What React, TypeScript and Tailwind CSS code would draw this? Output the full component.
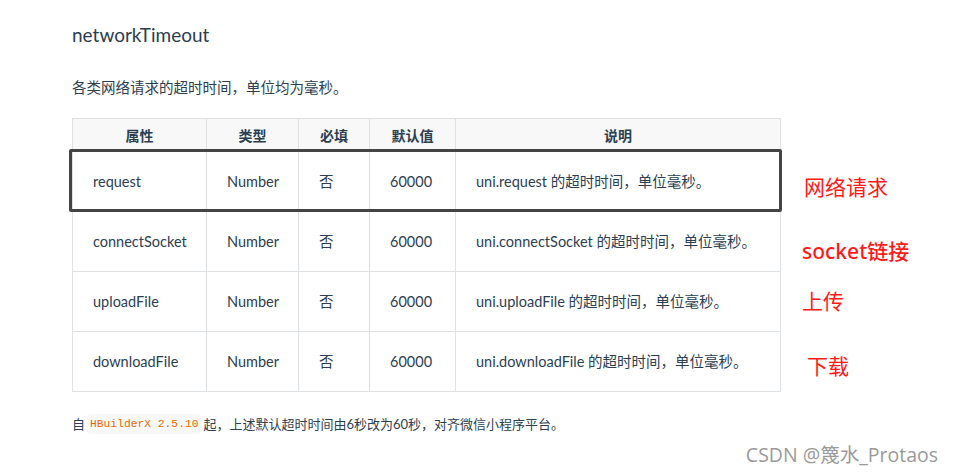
import React from "react";

interface Row {
  name: string;
  type: string;
  required: string;
  value: string;
  desc: string;
}

const rows: Row[] = [
  { name: "request", type: "Number", required: "否", value: "60000", desc: "uni.request 的超时时间，单位毫秒。" },
  { name: "connectSocket", type: "Number", required: "否", value: "60000", desc: "uni.connectSocket 的超时时间，单位毫秒。" },
  { name: "uploadFile", type: "Number", required: "否", value: "60000", desc: "uni.uploadFile 的超时时间，单位毫秒。" },
  { name: "downloadFile", type: "Number", required: "否", value: "60000", desc: "uni.downloadFile 的超时时间，单位毫秒。" },
];

const headers = ["属性", "类型", "必填", "默认值", "说明"];
const widths = ["w-[134px]", "w-[92px]", "w-[71px]", "w-[86px]", "w-[325px]"];

const font = { fontFamily: '"Lato", "Noto Sans CJK SC", sans-serif' };

export default function App() {
  return (
    <div
      className="relative h-[475px] w-[954px] overflow-hidden bg-white pl-[72px] text-[#2c3e50]"
      style={font}
    >
      <h2 className="pt-[23px] text-[19px] leading-6 font-normal">networkTimeout</h2>
      <p className="mt-[31px] text-[14.5px] leading-5">各类网络请求的超时时间，单位均为毫秒。</p>

      <div className="mt-[20px] flex">
        {/* table with highlighted first row */}
        <div className="relative">
          <table className="w-[709px] table-fixed border-collapse text-[14.5px]">
            <thead>
              <tr className="h-[33px] bg-[#f8f8f8] text-[14px]">
                {headers.map((h, i) => (
                  <th key={h} className={`${widths[i]} border border-[#dfe2e5] text-center font-bold`}>
                    {h}
                  </th>
                ))}
              </tr>
            </thead>
            <tbody>
              {rows.map((r) => (
                <tr key={r.name} className="h-[60px]">
                  <td className="border border-[#dfe2e5] pl-[20px]">{r.name}</td>
                  <td className="border border-[#dfe2e5] pl-[20px]">{r.type}</td>
                  <td className="border border-[#dfe2e5] pl-[20px]">{r.required}</td>
                  <td className="border border-[#dfe2e5] pl-[20px]">{r.value}</td>
                  <td className="border border-[#dfe2e5] pl-[20px]">{r.desc}</td>
                </tr>
              ))}
            </tbody>
          </table>
          <div className="pointer-events-none absolute top-[31px] left-[-3px] h-[63px] w-[713px] rounded-[2px] border-[3px] border-[#444]" />
        </div>

        {/* red annotations */}
        <div
          className="flex flex-col pt-[33px] text-[21px] leading-6 font-medium text-[#ff1a1a]"
          style={{ fontFamily: '"Noto Sans", "Noto Sans CJK SC", sans-serif' }}
        >
          <div className="h-[60px] pt-[24px] pl-[23px] font-normal">网络请求</div>
          <div className="h-[60px] pt-[28px] pl-[21px]">socket链接</div>
          <div className="h-[60px] pt-[18px] pl-[21px] font-normal">上传</div>
          <div className="h-[60px] pt-[23px] pl-[26px] font-normal">下载</div>
        </div>
      </div>

      <p className="mt-[22px] flex items-center text-[13px] leading-5">
        <span>自</span>
        <code
          className="mx-[2px] rounded-[3px] bg-[#f8f8f8] px-[3px] text-[11.3px] leading-5 text-[#e96900]"
          style={{ fontFamily: '"Liberation Mono", monospace' }}
        >
          HBuilderX 2.5.10
        </code>
        <span>起，上述默认超时时间由6秒改为60秒，对齐微信小程序平台。</span>
      </p>

      <div
        className="absolute right-[16px] bottom-[8px] text-[19.5px] leading-6 text-[#9a9a9a]"
        style={{ fontFamily: '"Open Sans", "Noto Sans CJK SC", sans-serif' }}
      >
        CSDN @篾水_Protaos
      </div>
    </div>
  );
}
